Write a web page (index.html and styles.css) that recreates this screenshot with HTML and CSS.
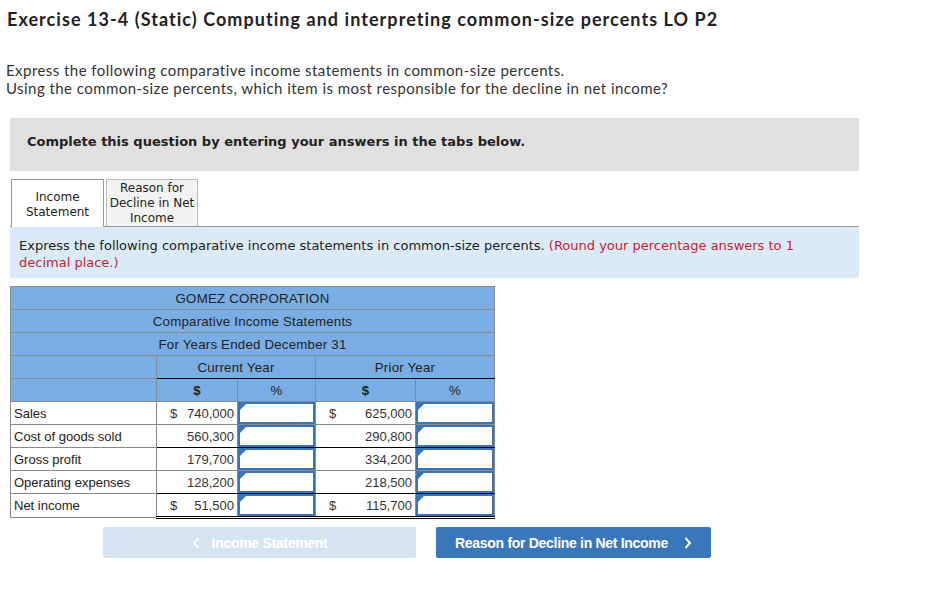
FILE: index.html
```html
<!DOCTYPE html>
<html>
<head>
<meta charset="utf-8">
<link rel="stylesheet" href="styles.css">
</head>
<body>
<h1 class="title">Exercise 13-4 (Static) Computing and interpreting common-size percents LO P2</h1>
<div class="intro">
  <p>Express the following comparative income statements in common-size percents.</p>
  <p>Using the common-size percents, which item is most responsible for the decline in net income?</p>
</div>
<div class="wrap">
  <div class="instruct">Complete this question by entering your answers in the tabs below.</div>
  <div class="tabs">
    <div class="tab active">Income<br>Statement</div>
    <div class="tab">Reason for<br>Decline in Net<br>Income</div>
  </div>
  <div class="info">
    <p>Express the following comparative income statements in common-size percents. <span class="red">(Round your percentage answers to 1</span></p>
    <p class="red">decimal place.)</p>
  </div>
  <table class="stmt">
    <colgroup>
      <col class="c1"><col class="c2"><col class="c3"><col class="c4"><col class="c5">
    </colgroup>
    <tr class="hd"><td colspan="5">GOMEZ CORPORATION</td></tr>
    <tr class="hd"><td colspan="5">Comparative Income Statements</td></tr>
    <tr class="hd"><td colspan="5">For Years Ended December 31</td></tr>
    <tr class="hd"><td></td><td colspan="2" class="bb">Current Year</td><td colspan="2" class="bb">Prior Year</td></tr>
    <tr class="hd"><td></td><td class="b">$</td><td>%</td><td class="b">$</td><td>%</td></tr>
    <tr class="row">
      <td class="lbl">Sales</td>
      <td class="amt cur"><span class="ds">$</span><span>740,000</span></td>
      <td class="inp"><div class="box"></div></td>
      <td class="amt pri"><span class="ds">$</span><span>625,000</span></td>
      <td class="inp"><div class="box"></div></td>
    </tr>
    <tr class="row sub">
      <td class="lbl">Cost of goods sold</td>
      <td class="amt cur"><span class="ds"></span><span>560,300</span></td>
      <td class="inp"><div class="box"></div></td>
      <td class="amt pri"><span class="ds"></span><span>290,800</span></td>
      <td class="inp"><div class="box"></div></td>
    </tr>
    <tr class="row">
      <td class="lbl">Gross profit</td>
      <td class="amt cur"><span class="ds"></span><span>179,700</span></td>
      <td class="inp"><div class="box"></div></td>
      <td class="amt pri"><span class="ds"></span><span>334,200</span></td>
      <td class="inp"><div class="box"></div></td>
    </tr>
    <tr class="row sub">
      <td class="lbl">Operating expenses</td>
      <td class="amt cur"><span class="ds"></span><span>128,200</span></td>
      <td class="inp"><div class="box"></div></td>
      <td class="amt pri"><span class="ds"></span><span>218,500</span></td>
      <td class="inp"><div class="box"></div></td>
    </tr>
    <tr class="row total">
      <td class="lbl">Net income</td>
      <td class="amt cur"><span class="ds">$</span><span>51,500</span></td>
      <td class="inp"><div class="box"></div></td>
      <td class="amt pri"><span class="ds">$</span><span>115,700</span></td>
      <td class="inp"><div class="box"></div></td>
    </tr>
  </table>
  <div class="nav">
    <div class="btn prev"><svg width="8" height="12" viewBox="0 0 8 12"><path d="M6.5 1 L2 6 L6.5 11" fill="none" stroke="#fff" stroke-width="2"/></svg><span>Income Statement</span></div>
    <div class="btn next"><span>Reason for Decline in Net Income</span><svg width="8" height="12" viewBox="0 0 8 12"><path d="M1.5 1 L6 6 L1.5 11" fill="none" stroke="#fff" stroke-width="2"/></svg></div>
  </div>
</div>
</body>
</html>
```
FILE: styles.css
```css
html, body { margin: 0; padding: 0; background: #fff; }
body { font-family: Lato, "Liberation Sans", sans-serif; color: #333; }
p { margin: 0; }
.title {
  margin: 0;
  padding: 9px 0 0 7px;
  font-size: 18px;
  font-weight: 700;
  letter-spacing: 1.05px;
  color: #222;
  line-height: 20px;
}
.intro {
  margin: 32px 0 0 6px;
  font-size: 15px;
  letter-spacing: 0.45px;
  line-height: 18px;
  color: #333;
}
.wrap { padding: 21px 0 0 10px; width: 849px; }
.instruct {
  background: #e0e0e0;
  height: 53px;
  box-sizing: border-box;
  padding: 16px 0 0 17px;
  font-family: "DejaVu Sans", sans-serif;
  font-weight: 700;
  font-size: 13px;
  line-height: 16px;
  color: #222;
}
.tabs {
  display: flex;
  margin-top: 8px;
  border-bottom: 1px solid #999;
  height: 47px;
  padding-left: 1px;
  gap: 2px;
}
.tab {
  font-family: "DejaVu Sans", sans-serif;
  font-size: 12px;
  line-height: 15px;
  color: #222;
  text-align: center;
  box-sizing: border-box;
  border: 1px solid #bbb;
  border-bottom: none;
  display: flex;
  align-items: center;
  justify-content: center;
  padding-top: 1px;
}
.tab.active { width: 93px; background: #fff; border-color: #999; margin-bottom: -1px; height: 48px; padding-top: 2px; }
.tab:not(.active) { width: 92px; background: #f2f2f2; height: 47px; }
.info {
  background: #dbeaf8;
  height: 51px;
  box-sizing: border-box;
  padding: 10px 0 0 9px;
  font-family: "DejaVu Sans", sans-serif;
  font-size: 13px;
  line-height: 17px;
  color: #222;
}
.red { color: #c4262e; }
.stmt {
  margin-top: 8px;
  border-collapse: collapse;
  table-layout: fixed;
  width: 485px;
  font-family: "Liberation Sans", Arial, sans-serif;
  font-size: 13px;
  color: #333;
}
.c1 { width: 146px; } .c2 { width: 81px; } .c3 { width: 78px; } .c4 { width: 100px; } .c5 { width: 79px; }
.stmt td {
  border: 1px solid #8a8a8a;
  height: 23px;
  padding: 0;
  box-sizing: border-box;
}
.hd td { background: #7aade3; text-align: center; color: #222; letter-spacing: 0.2px; font-size: 13.3px; }
.hd td.bb { border-bottom: 1px solid #000; }
.hd td.b { font-weight: 700; }
.row td { background: #fff; }
.lbl { padding-left: 3px !important; color: #222; }
.amt { text-align: right; }
.amt .ds { float: left; }
.cur { padding: 0 3px 0 13px !important; }
.pri { padding: 0 3px 0 13px !important; }
.sub td:not(.lbl) { border-bottom: 1px solid #000; }
.total td:not(.lbl) { border-bottom: 3px double #000; }
.inp { padding: 0 !important; }
.box {
  position: relative;
  height: 22px;
  box-sizing: border-box;
  border: 2px solid #3b73b9;
  margin: 0;
}
.box::before {
  content: "";
  position: absolute;
  left: 0;
  top: 0;
  width: 0;
  height: 0;
  border-left: 6px solid #3b73b9;
  border-bottom: 6px solid transparent;
}
.nav {
  display: flex;
  gap: 20px;
  margin: 8px 0 0 93px;
}
.btn {
  height: 31px;
  border-radius: 2px;
  display: flex;
  align-items: center;
  justify-content: center;
  gap: 12px;
  font-family: "Liberation Sans", Arial, sans-serif;
  font-weight: 700;
  font-size: 14px;
  color: #fff;
  letter-spacing: -0.3px;
}
.prev { width: 313px; background: #d6e3f1; }
.next { width: 275px; background: #3a76ba; gap: 16px; }
```
